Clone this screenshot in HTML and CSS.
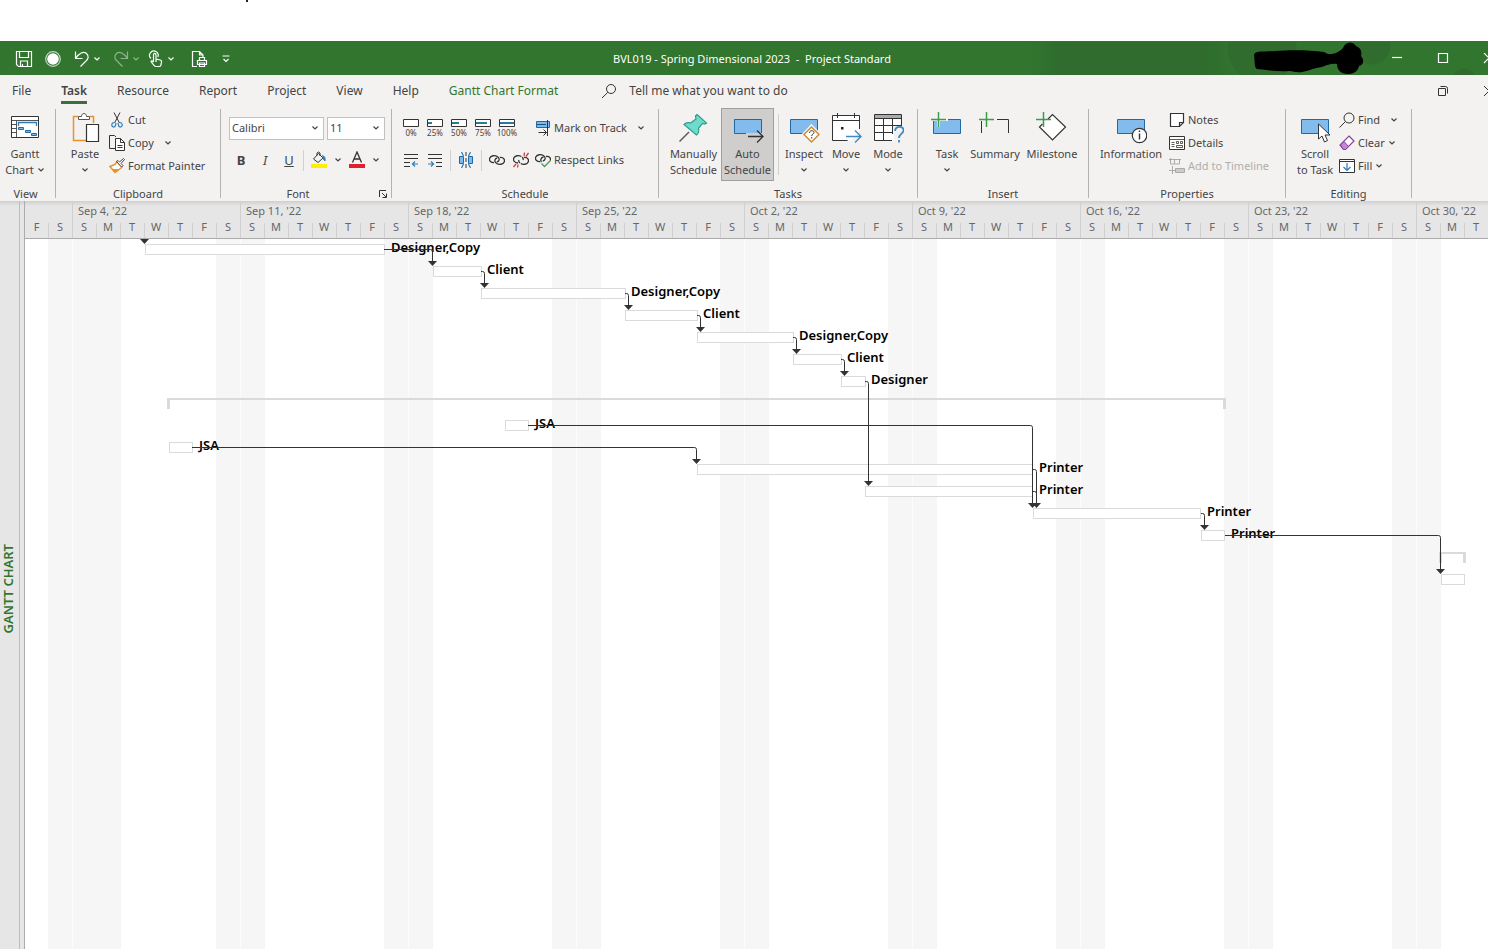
FILE: index.html
```html
<!DOCTYPE html>
<html lang="en">
<head>
<meta charset="utf-8">
<title>BVL019 - Spring Dimensional 2023 - Project Standard</title>
<link rel="stylesheet" href="styles.css">
</head>
<body>
<svg class="defs" aria-hidden="true">
  <symbol id="chev" viewBox="0 0 8 8"><path d="M1.500 2.500 4 5 6.500 2.500" fill="none" stroke="currentColor" stroke-width="1.200"/></symbol>
  <symbol id="plus" viewBox="0 0 16 16"><path d="M7.500 0v15M0 7.500h15" stroke="#3f9a4c" stroke-width="1.500" fill="none"/></symbol>
  <symbol id="arrow" viewBox="0 0 9 5"><path d="M0 0h9L4.500 5z" fill="#333"/></symbol>
</svg>

<div class="top-strip"><span class="dot"></span></div>

<header class="titlebar">
  <div class="titlebar-inner">
    <div class="qat">
      <button aria-label="Save"><svg width="18" height="18" viewBox="0 0 18 18"><path d="M1.500 1.500h15v15h-13l-2-2zM4.500 1.500v6h9v-6M5.500 16v-5h7v5M7.500 14v2" class="w"/></svg></button>
      <button aria-label="Record"><svg width="18" height="18" viewBox="0 0 18 18"><circle cx="9" cy="9" r="7.300" class="w" opacity=".7"/><circle cx="9" cy="9" r="5.800" fill="#fff"/></svg></button>
      <button aria-label="Undo"><svg width="18" height="18" viewBox="0 0 18 18"><path d="M2.500 1.500v7h7M2.800 8.200C6 3 10.500 1 13.500 3.500c3 2.700 1.500 5.500-.5 7.500L7.500 16.500" class="w"/></svg></button>
      <button class="drop" aria-label="Undo list"><svg width="8" height="8"><use href="#chev"/></svg></button>
      <button class="dim" aria-label="Redo"><svg width="18" height="18" viewBox="0 0 18 18"><path d="M15.500 1.500v7h-7M15.200 8.200C12 3 7.500 1 4.500 3.500c-3 2.700-1.500 5.500.5 7.500l5.500 5.500" class="w"/></svg></button>
      <button class="drop dim" aria-label="Redo list"><svg width="8" height="8"><use href="#chev"/></svg></button>
      <button class="touch" aria-label="Touch mode"><svg width="18" height="18" viewBox="0 0 18 18"><path d="M4 8.500A4.300 4.300 0 1 1 10.800 7M6.500 12V4.800c0-1.800 2.500-1.800 2.500 0V9l4.300 1c1 .3 1.400.8 1.200 2l-.6 3.200c-.2 1-.7 1.300-1.500 1.300H9c-.8 0-1.300-.3-1.800-1L4.300 12c-.6-1.300.8-1.700 2.200 0M9 9v3" class="w"/></svg></button>
      <button class="drop" aria-label="Touch mode list"><svg width="8" height="8"><use href="#chev"/></svg></button>
      <button class="print" aria-label="Print preview"><svg width="18" height="18" viewBox="0 0 18 18"><path d="M7 16.500H2.500v-15h7l3.500 3.500v3M9.500 1.500V5H13M7.500 14.500v-4h9v4zM9.500 10V7.500h5V10M9.500 13h5v3.500h-5z" class="w"/></svg></button>
      <button aria-label="Customize toolbar"><svg width="10" height="10" viewBox="0 0 10 10"><path d="M1.500 2h7M2.500 5 5 7.500 7.500 5" class="w"/></svg></button>
    </div>
    <h1>BVL019 - Spring Dimensional 2023&nbsp; -&nbsp; Project Standard</h1>
    <div class="caption">
      <svg class="scribble" width="112" height="34" viewBox="0 0 112 34"><path d="M1 13C2 8 12 10 22 9c15-1 35-1 49 1 3 2 6 3 12 1 3-2 6-3 7-5 2-6 9-8 13-2 5 2 6 6 5 10 4 5 2 9-2 10-1 5-5 8-11 8-7 0-11-4-11-10-5-1-10 1-15 3-8 1-14 4-20 5-6 1-8-1-13-1-11 1-22-1-32-2C1 26 2 18 1 13z" fill="#000"/></svg>
      <button aria-label="Minimize"><svg width="12" height="12" viewBox="0 0 12 12"><path d="M1 4.500h10" class="w"/></svg></button>
      <button aria-label="Maximize"><svg width="12" height="12" viewBox="0 0 12 12"><path d="M1.500 0.500h9v9h-9z" class="w"/></svg></button>
      <button aria-label="Close"><svg width="12" height="12" viewBox="0 0 12 12"><path d="M1 0l10 10M11 0 1 10" class="w"/></svg></button>
    </div>
  </div>
</header>

<nav class="tabs">
  <button>File</button><button class="active">Task</button><button>Resource</button><button>Report</button><button>Project</button><button>View</button><button>Help</button><button class="context">Gantt Chart Format</button>
  <label class="tell"><svg width="16" height="16" viewBox="0 0 16 16"><circle cx="10" cy="6" r="4.500" class="k"/><path d="M6.800 9.300 1 15" class="k"/></svg><input type="text" placeholder="Tell me what you want to do"></label>
  <div class="doc-controls">
    <button aria-label="Restore document"><svg width="12" height="12" viewBox="0 0 12 12"><path d="M1.500 3.500h7v7h-7zM3.500 1.500h5q2 0 2 2v5" class="k"/></svg></button>
    <button aria-label="Close document"><svg width="12" height="12" viewBox="0 0 12 12"><path d="M1 1l10 10M11 1 1 11" class="k"/></svg></button>
  </div>
</nav>

<div class="ribbon">
  <section class="group g-view">
    <div class="body">
      <button class="big"><svg width="32" height="32" viewBox="0 0 32 32"><path d="M2.500 4.500h27v21h-27z" fill="#fff" stroke="#333"/><path d="M3 8.500h26M7.500 9v16M3 12.500h4M3 16.500h4M3 20.500h4" stroke="#555" fill="none"/><path d="M9.500 14v-3.500h18V14" stroke="#2b7cb8" stroke-width="1.300" fill="none"/><path d="M9.500 15.500h5v2h-5zM16.500 18.500h5v2h-5zM22.500 21.500h5v2h-5z" fill="#7abaf0" stroke="#1f6aa5"/></svg><span>Gantt<br>Chart <svg width="8" height="8"><use href="#chev"/></svg></span></button>
    </div>
    <h2>View</h2>
  </section>

  <section class="group g-clip">
    <div class="body">
      <button class="big"><svg width="32" height="32" viewBox="0 0 32 32"><path d="M9 4.500H4.500v24h13M21 4.500h3.500V11" fill="none" stroke="#e8912d" stroke-width="1.500"/><path d="M9.500 7.500v-3h3c0-4 5-4 5 0h3v3z" fill="#fff" stroke="#555"/><path d="M17.500 12.500h12v17h-12z" fill="#fff" stroke="#333" stroke-width="1.200"/></svg><span>Paste<br><svg width="8" height="8"><use href="#chev"/></svg></span></button>
      <div class="stack">
        <button><svg width="16" height="16" viewBox="0 0 16 16"><path d="M5 .5 10.500 11M11 .5 5.500 11" class="k"/><path d="M5.500 10.500c-3.500-.3-3.500 5-.5 4.500 2-.3 1.500-2.500 2-4M10.500 10.500c3.500-.3 3.500 5 .5 4.500-2-.3-1.500-2.500-2-4" class="b"/></svg>Cut</button>
        <button><svg width="16" height="16" viewBox="0 0 16 16"><path d="M6 13.500H.5V.5h5L7 2" class="k"/><path d="M6.500 3.500h5l4 4v8h-9z" fill="#fff" stroke="#333"/><path d="M11.500 3.500v4h4M8.500 10.500h5M8.500 12.500h5" class="k"/></svg>Copy<svg class="c far" width="8" height="8"><use href="#chev"/></svg></button>
        <button><svg width="16" height="16" viewBox="0 0 16 16"><path d="M8 3.500 13 9l-1 1-6 4.500L1 8.500l5-2z" fill="#fff" stroke="#e8912d" stroke-width="1.500"/><path d="M3 11h7l-4 3.500z" fill="#e8912d"/><path d="m7.500 3.500 5 5.500 1.500-1.500-2-2 3.500-4-1-1-4 3.500L9 2.500z" fill="#fff" stroke="#444"/></svg>Format Painter</button>
      </div>
    </div>
    <h2>Clipboard</h2>
  </section>

  <section class="group g-font">
    <div class="body rows">
      <div class="row combos">
        <div class="combo name"><select aria-label="Font"><option>Calibri</option></select><svg width="8" height="8"><use href="#chev"/></svg></div>
        <div class="combo size"><select aria-label="Font size"><option>11</option></select><svg width="8" height="8"><use href="#chev"/></svg></div>
      </div>
      <div class="row">
        <button class="tool fmt"><b>B</b></button><button class="tool fmt"><i>I</i></button><button class="tool fmt"><u>U</u></button>
        <span class="bar"></span>
        <button class="tool" aria-label="Background color"><svg width="16" height="18" viewBox="0 0 16 18"><path d="M7.500 2.500 12 7l-5 4.500L2.500 8zM6 4.500V2q1.500-2 3 0v3" class="k"/><path d="M11 4.500c2.500.5 3.500 2 3 5.500-1.500-1.500-2-2-2-4" fill="#2b7cb8" stroke="#2b7cb8"/><path d="M0 13h16v4H0z" fill="#ffee00"/></svg></button>
        <button class="pick" aria-label="Background colors"><svg width="8" height="8"><use href="#chev"/></svg></button>
        <button class="tool" aria-label="Font color"><svg width="16" height="18" viewBox="0 0 16 18"><path d="M3.500 11.500 8 1l4.500 10.500M5 8h6" class="k" stroke-width="1.300"/><path d="M0 13h16v4H0z" fill="#e0202c"/></svg></button>
        <button class="pick" aria-label="Font colors"><svg width="8" height="8"><use href="#chev"/></svg></button>
      </div>
    </div>
    <h2 class="with-launcher">Font<button aria-label="Font settings"><svg width="8" height="8" viewBox="0 0 8 8"><path d="M.5 7V.5H7M3 3l4 4M7.500 3.500v4h-4" class="k"/></svg></button></h2>
  </section>

  <section class="group g-sched">
    <div class="body rows">
      <div class="row">
        <button class="tool pct"><svg width="16" height="9" viewBox="0 0 16 9"><path d="M.5.5h15v7H.5z" fill="#fff" stroke="#333"/></svg>0%</button>
        <button class="tool pct"><svg width="16" height="9" viewBox="0 0 16 9"><path d="M.5.5h15v7H.5z" fill="#fff" stroke="#333"/><path d="M1 4h4" stroke="#2b7c9c" stroke-width="2"/></svg>25%</button>
        <button class="tool pct"><svg width="16" height="9" viewBox="0 0 16 9"><path d="M.5.5h15v7H.5z" fill="#fff" stroke="#333"/><path d="M1 4h7" stroke="#2b7c9c" stroke-width="2"/></svg>50%</button>
        <button class="tool pct"><svg width="16" height="9" viewBox="0 0 16 9"><path d="M.5.5h15v7H.5z" fill="#fff" stroke="#333"/><path d="M1 4h11" stroke="#2b7c9c" stroke-width="2"/></svg>75%</button>
        <button class="tool pct"><svg width="16" height="9" viewBox="0 0 16 9"><path d="M.5.5h15v7H.5z" fill="#fff" stroke="#333"/><path d="M1 4h14" stroke="#2b7c9c" stroke-width="2"/></svg>100%</button>
        <button class="inline mark"><svg width="16" height="16" viewBox="0 0 16 16"><path d="M1.500 1.500h13v6h-13z" fill="#7abaf0" stroke="#1f6aa5"/><path d="M2 4.500h9" stroke="#1f4f7a"/><path d="M12.500 0v16M3.500 12.500h8M8.500 9.500l3 3-3 3" class="k"/></svg>Mark on Track<svg class="c far" width="8" height="8"><use href="#chev"/></svg></button>
      </div>
      <div class="row">
        <button class="tool" aria-label="Outdent task"><svg width="16" height="16" viewBox="0 0 16 16"><path d="M1 2.500h14M1 6.500h14M1 10.500h6M1 14.500h6" class="k"/><path d="M15 12H9.500M12 9.500 9.500 12l2.500 2.500" class="b"/></svg></button>
        <button class="tool" aria-label="Indent task"><svg width="16" height="16" viewBox="0 0 16 16"><path d="M1 2.500h14M1 6.500h14M9 10.500h6M9 14.500h6" class="k"/><path d="M1 12h5.500M4 9.500 6.500 12 4 14.500" class="b"/></svg></button>
        <span class="bar tight"></span>
        <button class="tool" aria-label="Split task"><svg width="16" height="16" viewBox="0 0 16 16"><path d="M1.500 4.500h4v7h-4zM10.500 4.500h4v7h-4z" fill="#7abaf0" stroke="#1f6aa5"/><path d="M8 0v4M8 6v4M8 12v4" class="k"/><path d="m3.500 0 2 4M12.500 0l-2 4M3.500 16l2-4M12.500 16l-2-4" class="b"/></svg></button>
        <span class="bar tight"></span>
        <button class="tool" aria-label="Link tasks"><svg width="16" height="16" viewBox="0 0 16 16"><path d="M5 10.500C1 11 0 8 .8 6c1-2.500 5-3 7.500-1.500 3 2 2 5-.5 5.500M11 5.500c4-.5 5 2.500 4.200 4.500-1 2.500-5 3-7.500 1.500-3-2-2-5 .5-5.500" class="k" stroke-width="1.300"/></svg></button>
        <button class="tool" aria-label="Unlink tasks"><svg width="16" height="16" viewBox="0 0 16 16"><path d="M5 11C1 11 0 8 .8 6c1-2.500 5-3 7.500-1.500M11 5.500c4-.5 5 2.500 4.200 4.500-1 2.500-5 3-7.500 1.500M9 5c1.300 1 1.500 2 1 3M7 11c-1.300-1-1.500-2-1-3" class="k" stroke-width="1.300"/><path d="m11 4 .5-3.500M13 4.500 15.500 1M5 12.500l-.5 3M3 12 .5 15" stroke="#d33a43" stroke-width="1.300" fill="none"/></svg></button>
        <button class="inline respect"><svg width="16" height="16" viewBox="0 0 16 16"><path d="M5 9.500C1 10 0 7 .8 5c1-2.500 5-3 7.500-1.500 3 2 2 5-.5 5.500M11 4.500c4-.5 5 2 4.200 4M6.500 10C5 8 6 5.500 8.500 5" class="k" stroke-width="1.300"/><path d="m6.500 11.500 3 3 6-6" stroke="#4a9a55" stroke-width="1.300" fill="none"/></svg>Respect Links</button>
      </div>
    </div>
    <h2>Schedule</h2>
  </section>

  <section class="group g-tasks">
    <div class="body">
      <button class="big wide"><svg width="32" height="32" viewBox="0 0 32 32"><path d="M11 20 1.500 29.500" stroke="#555" stroke-width="1.500"/><path d="m19 2.500 9.500 8.500-2 1-2-.5-4 5c.8 3 0 5-2 6.500L6 12.500c2-2 4-2.200 6.500-1.500L18 7l-.5-3z" fill="#6fdccb" stroke="#2f9c8c" stroke-width="1.200"/></svg><span>Manually<br>Schedule</span></button>
      <button class="big wide pressed"><svg width="32" height="32" viewBox="0 0 32 32"><path d="M2.500 7.500h27v14h-27z" fill="#83bbec" stroke="#1f6aa5"/><path d="M14 21h17v6H14z" fill="#cfcecd"/><path d="M16 24.500h15M25 18.500l6 6-6 6" fill="none" stroke="#333" stroke-width="1.300"/></svg><span>Auto<br>Schedule</span></button>
      <span class="divider"></span>
      <button class="big w42"><svg width="32" height="32" viewBox="0 0 32 32"><path d="M2.500 7.500h27v14h-27z" fill="#83bbec" stroke="#1f6aa5"/><path d="m23.500 14 8 8.500-8 8-8-8z" fill="#fff" stroke="#f3f2f1" stroke-width="3"/><path d="m23.500 15 7.500 7.500-7.500 7.500-7.500-7.500z" fill="#fff" stroke="#d48a30" stroke-width="1.500"/><path d="M21.500 21c0-3 4.500-3 4.500-.5 0 1.500-2.300 1.500-2.300 3.500M23.700 25v1.500" class="k"/></svg><span>Inspect<br><svg width="8" height="8"><use href="#chev"/></svg></span></button>
      <button class="big w42"><svg width="32" height="32" viewBox="0 0 32 32"><path d="M3 4h26v17l-8 7H3z" fill="#fff"/><path d="M29.500 17V3.500h-27v25h15M2.500 8.500h27M7.500 1v5M24.500 1v5" class="k"/><path d="M11 15h2.500v2.500H11z" fill="#222"/><path d="M16 24.500h15M25 18.500l6 6-6 6" fill="none" stroke="#3d8ac5" stroke-width="1.400"/></svg><span>Move<br><svg width="8" height="8"><use href="#chev"/></svg></span></button>
      <button class="big w42"><svg width="32" height="32" viewBox="0 0 32 32"><path d="M2.500 2.500h27v26h-27z" fill="#fff"/><path d="M3 2.500h26v4H3z" fill="#aaa"/><path d="M20 28.500H2.500v-26h27V14M2.500 6.500h27M3 13.500h26M3 20.500h18M11.500 7v21M20.500 7v15" class="k"/><path d="M21 14h11v18H22z" fill="#f3f2f1"/><path d="M23 19c.5-5.500 9-5.500 8.500-.5-.3 3-4.500 3.500-4.500 7.500M27 28v2.500" fill="none" stroke="#3d8ac5" stroke-width="1.800"/></svg><span>Mode<br><svg width="8" height="8"><use href="#chev"/></svg></span></button>
    </div>
    <h2>Tasks</h2>
  </section>

  <section class="group g-insert">
    <div class="body">
      <button class="big w42"><svg width="32" height="32" viewBox="0 0 32 32"><path d="M2.500 7.500h27v14h-27z" fill="#83bbec" stroke="#1f6aa5"/><path d="M0 5h17v4H9v6H6V9H0z" fill="#f3f2f1"/><use href="#plus" width="16" height="16"/></svg><span>Task<br><svg width="8" height="8"><use href="#chev"/></svg></span></button>
      <button class="big w54"><svg width="32" height="32" viewBox="0 0 32 32"><path d="M2.500 9v12M18 7.500h11.500V21" class="k"/><use href="#plus" width="16" height="16"/></svg><span>Summary</span></button>
      <button class="big w60"><svg width="32" height="32" viewBox="0 0 32 32"><path d="M12 7 16.500 2.500 29.500 15 16.500 28 3.500 15 6.500 12" fill="#fff" stroke="#333" stroke-width="1.200"/><use href="#plus" width="16" height="16"/></svg><span>Milestone</span></button>
    </div>
    <h2>Insert</h2>
  </section>

  <section class="group g-props">
    <div class="body">
      <button class="big w70"><svg width="32" height="32" viewBox="0 0 32 32"><path d="M2.500 7.500h27v14h-27z" fill="#83bbec" stroke="#1f6aa5"/><circle cx="24.500" cy="23.500" r="7.200" fill="#fff" stroke="#333" stroke-width="1.200"/><path d="M24.500 21.500v6M24.500 18.500v1.500" stroke="#333" stroke-width="1.400"/></svg><span>Information</span></button>
      <div class="stack">
        <button><svg width="16" height="16" viewBox="0 0 16 16"><path d="M1.500 1.500h13v9l-4 4h-9zM14.500 10.500h-4v4" fill="#fff" stroke="#333" stroke-width="1.200"/></svg>Notes</button>
        <button><svg width="16" height="16" viewBox="0 0 16 16"><path d="M.5 1.500h15v13H.5z" fill="#fff" stroke="#333"/><path d="M1 4.500h14M2.500 7.500h3M2.500 9.500h3M2.500 11.500h3M7.500 6.500h2v2h-2zM11.500 6.500h2v2h-2zM7.500 10.500h6v2h-6z" class="k" opacity=".8"/></svg>Details</button>
        <button disabled><svg width="16" height="16" viewBox="0 0 16 16"><path d="M0 1.500h12M1.500 0v6h4V2M5.500 6h5V2M3.500 8v8M0 12.500h6" fill="none" stroke="#aaa"/><path d="M6.500 10.500h9v4h-9z" fill="#ccc" stroke="#aaa"/></svg>Add to Timeline</button>
      </div>
    </div>
    <h2>Properties</h2>
  </section>

  <section class="group g-edit">
    <div class="body">
      <button class="big w42"><svg width="32" height="32" viewBox="0 0 32 32"><path d="M2.500 7.500h27v14h-27z" fill="#83bbec" stroke="#1f6aa5"/><path d="M19.500 12v15l3.500-3 2.500 6 3-1.500-2.500-5.500h5z" fill="#fff" stroke="#333"/></svg><span>Scroll<br>to Task</span></button>
      <div class="stack">
        <button><svg width="16" height="16" viewBox="0 0 16 16"><circle cx="10" cy="6" r="5" class="k"/><path d="M6.500 9.500.5 15.500" class="k"/></svg>Find<svg class="c far" width="8" height="8"><use href="#chev"/></svg></button>
        <button><svg width="16" height="16" viewBox="0 0 16 16"><path d="m10 1 5 5-8.500 8.500H4.500L1 10z" fill="#fff" stroke="#8a3f9c" stroke-width="1.200"/><path d="m1.500 10 3.500-3.500 4.500 5-3 3h-2z" fill="#c08ad0" stroke="#8a3f9c"/></svg>Clear<svg class="c" width="8" height="8"><use href="#chev"/></svg></button>
        <button><svg width="16" height="16" viewBox="0 0 16 16"><path d="M.5 1.500h15v13H.5z" fill="#fff" stroke="#333"/><path d="M1 3.500h14" class="k"/><path d="M8 5v7.500M4.500 9 8 12.500 11.500 9" class="b"/></svg>Fill<svg class="c" width="8" height="8"><use href="#chev"/></svg></button>
      </div>
    </div>
    <h2>Editing</h2>
  </section>
</div>

<main class="workspace">
  <aside class="view-name"><span>GANTT CHART</span></aside>
  <div class="gantt">
    <div class="timescale">
      <div class="week first"><span></span><i>F</i><i>S</i></div>
      <div class="week"><span>Sep 4, '22</span><i>S</i><i>M</i><i>T</i><i>W</i><i>T</i><i>F</i><i>S</i></div>
      <div class="week"><span>Sep 11, '22</span><i>S</i><i>M</i><i>T</i><i>W</i><i>T</i><i>F</i><i>S</i></div>
      <div class="week"><span>Sep 18, '22</span><i>S</i><i>M</i><i>T</i><i>W</i><i>T</i><i>F</i><i>S</i></div>
      <div class="week"><span>Sep 25, '22</span><i>S</i><i>M</i><i>T</i><i>W</i><i>T</i><i>F</i><i>S</i></div>
      <div class="week"><span>Oct 2, '22</span><i>S</i><i>M</i><i>T</i><i>W</i><i>T</i><i>F</i><i>S</i></div>
      <div class="week"><span>Oct 9, '22</span><i>S</i><i>M</i><i>T</i><i>W</i><i>T</i><i>F</i><i>S</i></div>
      <div class="week"><span>Oct 16, '22</span><i>S</i><i>M</i><i>T</i><i>W</i><i>T</i><i>F</i><i>S</i></div>
      <div class="week"><span>Oct 23, '22</span><i>S</i><i>M</i><i>T</i><i>W</i><i>T</i><i>F</i><i>S</i></div>
      <div class="week"><span>Oct 30, '22</span><i>S</i><i>M</i><i>T</i></div>
    </div>
    <div class="chart">
      <svg width="100%" height="100%">
        <g transform="translate(-25 -239)">
          <rect x="96" y="239" width="25" height="100%" fill="#f6f6f6"/>
          <g class="task">
            <rect x="145.500" y="244.500" width="239" height="10"/>
            <rect x="433.500" y="266.500" width="48" height="10"/>
            <rect x="481.500" y="288.500" width="144" height="10"/>
            <rect x="625.500" y="310.500" width="72" height="10"/>
            <rect x="697.500" y="332.500" width="96" height="10"/>
            <rect x="793.500" y="354.500" width="48" height="10"/>
            <rect x="841.500" y="376.500" width="24" height="10"/>
            <rect x="505.500" y="420.500" width="23" height="10"/>
            <rect x="169.500" y="442.500" width="23" height="10"/>
            <rect x="697.500" y="464.500" width="335" height="10"/>
            <rect x="865.500" y="486.500" width="167" height="10"/>
            <rect x="1033.500" y="508.500" width="167" height="10"/>
            <rect x="1201.500" y="530.500" width="23" height="10"/>
            <rect x="1441.500" y="574.500" width="23" height="10"/>
          </g>
          <path class="summary" d="M167 398h1059v11h-3v-9H170v9h-3zM1439 552h27v11h-3v-9h-21v9h-3z"/>
          <g class="label">
            <text x="391" y="252">Designer,Copy</text>
            <text x="487" y="274">Client</text>
            <text x="631" y="296">Designer,Copy</text>
            <text x="703" y="318">Client</text>
            <text x="799" y="340">Designer,Copy</text>
            <text x="847" y="362">Client</text>
            <text x="871" y="384">Designer</text>
            <text x="535" y="428">JSA</text>
            <text x="199" y="450">JSA</text>
            <text x="1039" y="472">Printer</text>
            <text x="1039" y="494">Printer</text>
            <text x="1207" y="516">Printer</text>
            <text x="1231" y="538">Printer</text>
          </g>
          <path class="link" d="M384 249.500h46.500q2 0 2 2V262M481 271.500h1.500q2 0 2 2V284M625 293.500h1.500q2 0 2 2V306M697 315.500h1.500q2 0 2 2V328M793 337.500h1.500q2 0 2 2V350M841 359.500h1.500q2 0 2 2V372M865 381.500h1.500q2 0 2 2V482M528 425.500h502.500q2 0 2 2V504M192 447.500h502.500q2 0 2 2V460M1033 469.500h1.500q2 0 2 2V504M1033 491.500h1.500q2 0 2 2V504M1201 513.500h1.500q2 0 2 2V526M1225 535.500h213.500q2 0 2 2V570"/>
          <g>
            <use href="#arrow" x="140" y="239" width="9" height="5"/>
            <use href="#arrow" x="428" y="261" width="9" height="5"/>
            <use href="#arrow" x="480" y="283" width="9" height="5"/>
            <use href="#arrow" x="624" y="305" width="9" height="5"/>
            <use href="#arrow" x="696" y="327" width="9" height="5"/>
            <use href="#arrow" x="792" y="349" width="9" height="5"/>
            <use href="#arrow" x="840" y="371" width="9" height="5"/>
            <use href="#arrow" x="692" y="459" width="9" height="5"/>
            <use href="#arrow" x="864" y="481" width="9" height="5"/>
            <use href="#arrow" x="1028" y="503" width="9" height="5"/>
            <use href="#arrow" x="1032" y="503" width="9" height="5"/>
            <use href="#arrow" x="1200" y="525" width="9" height="5"/>
            <use href="#arrow" x="1436" y="569" width="9" height="5"/>
          </g>
        </g>
      </svg>
    </div>
  </div>
</main>
</body>
</html>
```
FILE: styles.css
```css
* { box-sizing: border-box; }
body {
  margin: 0;
  min-height: 100vh;
  display: flex;
  flex-direction: column;
  overflow: hidden;
  background: #fff;
  color: #444;
  font: 12px/16px "Noto Sans", "Open Sans", sans-serif;
}
button, input, select { font: inherit; color: inherit; border: 0; background: none; padding: 0; margin: 0; }
button { display: flex; align-items: center; justify-content: center; white-space: nowrap; }
h1, h2 { margin: 0; font-size: 11px; font-weight: 400; }
svg { flex: none; display: block; }
.defs { position: absolute; width: 0; height: 0; }
.w { fill: none; stroke: #fff; stroke-width: 1.2; }
.k { fill: none; stroke: #333; }
.b { fill: none; stroke: #2b7cb8; stroke-width: 1.2; }

.top-strip { height: 41px; padding-left: 246px; }
.dot { display: block; width: 2px; height: 2px; background: #222; }

.titlebar {
  height: 34px;
  overflow: hidden;
  color: #fff;
  background:
    radial-gradient(circle at 1262px 6px, #2f6c2d 0 34px, transparent 35px),
    radial-gradient(circle at 1372px 4px, #2f6c2d 0 18px, transparent 19px),
    radial-gradient(circle at 1464px 38px, #2f6c2d 0 11px, transparent 12px),
    linear-gradient(90deg, transparent 1030px, #2f6c2d 1060px 1200px, transparent 1240px),
    #31752f;
  border-top: 1px solid #3d6f3b;
}
.titlebar-inner { display: grid; grid-template-columns: 1fr auto 1fr; align-items: center; height: 100%; width: calc(100% + 16px); }
.qat { display: flex; align-items: center; padding-left: 9px; }
.qat button { width: 29px; height: 32px; }
.qat .drop { width: 10px; margin: 0 4px 0 -4px; }
.qat .touch { margin-left: -4px; }
.qat .print { margin-left: 4px; }
.qat .dim { opacity: .45; }
.qat button:last-child { width: 26px; }
.caption { display: flex; justify-content: flex-end; align-items: center; margin-right: -8px; }
.caption button { width: 46px; height: 32px; }
.scribble { margin-right: 9px; }

.tabs { display: flex; height: 31px; padding-left: 12px; background: #f3f2f1; font-size: 12px; }
.tabs > button { justify-content: flex-start; margin-right: 30px; }
.tabs .active { font-weight: 600; box-shadow: inset 0 -2px #f3f2f1, inset 0 -5px #3d6f3b; }
.tabs .context { color: #31752f; }
.tell { display: flex; align-items: center; gap: 12px; margin-left: 13px; }
.tell input { width: 220px; }
.tell input::placeholder { color: #444; opacity: 1; }
.doc-controls { display: flex; margin-left: auto; margin-right: -24px; }
.doc-controls button { width: 46px; }

.ribbon { display: flex; height: 95px; padding: 2px 0; background: #f3f2f1; font-size: 11px; }
.group { flex: none; display: flex; flex-direction: column; justify-content: space-between; border-right: 1px solid #b5b3b1; margin: 1px 0; }
.group h2 { text-align: center; line-height: 16px; margin-bottom: -4px; }
.body { display: flex; margin-top: -1px; }
.g-view { width: 56px; }
.g-view h2 { padding-right: 4px; }
.g-clip { width: 165px; }
.g-clip .body { padding-left: 4px; }
.g-clip .stack { margin-left: -4px; }
.g-font { width: 171px; }
.g-font .body { padding-left: 8px; }
.g-sched { width: 267px; }
.g-sched .body { padding-left: 7px; }
.g-tasks { width: 259px; }
.g-tasks .body { padding-left: 8px; }
.g-insert { width: 171px; }
.g-insert .body { padding-left: 8px; }
.g-props { width: 197px; }
.g-props .body { padding-left: 7px; }
.g-edit { width: 126px; }
.g-edit .body { padding-left: 8px; }

.big { flex-direction: column; justify-content: flex-start; gap: 2px; width: 50px; height: 73px; padding-top: 4px; text-align: center; }
.big span { line-height: 16px; }
.big span svg { display: inline-block; }
.wide { width: 53px; }
.pressed { background: #cfcecd; box-shadow: inset 0 0 0 1px #a09f9e; margin-left: 1px; }
.w42 { width: 42px; }
.w54 { width: 54px; }
.w60 { width: 60px; }
.w70 { width: 70px; }
.divider { width: 1px; margin: 6px 4px; background: #d2d0ce; }
.stack { display: flex; flex-direction: column; padding-left: 3px; }
.stack button { height: 23px; justify-content: flex-start; gap: 3px; }
.stack .far, .inline .far { margin-left: 7px; }
button:disabled { color: #b0aeac; }

.rows { flex-direction: column; padding-top: 4px; }
.row { display: flex; align-items: center; height: 32px; }
.combos { gap: 3px; }
.combo { display: grid; grid-template-columns: 1fr 12px; align-items: center; height: 23px; border: 1px solid #c3c1bf; background: #fff; }
.combo select { grid-area: 1 / 1 / 2 / 3; appearance: none; height: 21px; padding-left: 2px; }
.combo svg { grid-area: 1 / 2; pointer-events: none; }
.name { width: 95px; }
.size { width: 58px; }
.tool { width: 24px; height: 24px; }
.fmt { font-size: 13px; }
.bar { width: 1px; height: 21px; margin: 0 3px 0 2px; background: #d2d0ce; }
.bar.tight { margin: 0 3px; }
.pick { width: 14px; height: 24px; }
.pct { flex-direction: column; font-size: 8px; line-height: 9px; }
.inline { gap: 3px; height: 24px; }
.mark { margin-left: 16px; }
.respect { margin-left: 2px; }
.with-launcher { display: grid; grid-template-columns: 1fr 16px; }

.workspace { flex: 1; display: flex; background: linear-gradient(#cfcfcf, #e6e6e6 5px); }
.view-name { flex: none; width: 20px; border-right: 1px solid #bdbdbd; }
.view-name span { display: block; writing-mode: vertical-rl; transform: rotate(180deg); margin-top: 343px; line-height: 16px; color: #31752f; font-size: 13px; font-weight: 600; }
.gantt { flex: 1; min-width: 0; margin-left: 4px; border-left: 1px solid #ababab; display: flex; flex-direction: column; }
.timescale { display: flex; height: 38px; overflow: hidden; border-bottom: 1px solid #ababab; color: #666; font-size: 11px; }
.week { flex: none; display: grid; grid-template-columns: repeat(7, 24px); grid-template-rows: 20px 15px; width: 168px; padding-top: 2px; box-shadow: inset 1px 0 #d0d0d0; }
.week span { grid-column: 1 / -1; padding-left: 6px; line-height: 15px; }
.week i { font-style: normal; text-align: center; line-height: 7px; box-shadow: inset 1px 0 #d0d0d0; }
.week.first { width: 47px; grid-template-columns: 23px 24px; box-shadow: none; }
.week.first i:nth-of-type(1) { box-shadow: none; }
.chart { flex: 1; background: repeating-linear-gradient(90deg, #fff 0 23px, #f6f6f6 23px 47px, #fcfcfc 47px 48px, #f6f6f6 48px 72px, #fff 72px 168px); }
.task rect { fill: #fff; stroke: #dadada; }
.summary { fill: #dadada; }
.label { fill: #000; font-weight: 600; font-size: 13px; }
.link { fill: none; stroke: #333; }
```
